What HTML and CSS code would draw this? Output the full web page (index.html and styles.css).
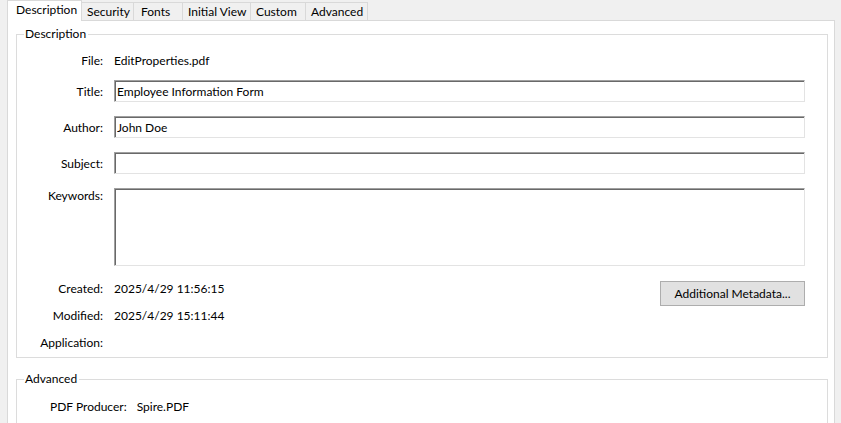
FILE: index.html
```html
<!DOCTYPE html>
<html lang="en">
<head>
    <meta charset="UTF-8">
    <title>Document Properties</title>
    <link rel="stylesheet" href="styles.css">
</head>
<body>
    <div class="window">
        <div class="tabs">
            <div class="tab active">Description</div>
            <div class="tab tab-security">Security</div>
            <div class="tab tab-fonts">Fonts</div>
            <div class="tab tab-view">Initial View</div>
            <div class="tab tab-custom">Custom</div>
            <div class="tab tab-advanced">Advanced</div>
        </div>

        <div class="panel">
            <fieldset class="group group-desc">
                <legend>Description</legend>

                <div class="row row-file">
                    <span class="label">File:</span>
                    <span class="value">EditProperties.pdf</span>
                </div>

                <div class="row row-field">
                    <label class="label" for="title">Title:</label>
                    <input type="text" id="title" class="field" value="Employee Information Form">
                </div>

                <div class="row row-field">
                    <label class="label" for="author">Author:</label>
                    <input type="text" id="author" class="field" value="John Doe">
                </div>

                <div class="row row-field">
                    <label class="label" for="subject">Subject:</label>
                    <input type="text" id="subject" class="field" value="">
                </div>

                <div class="row row-keywords">
                    <label class="label" for="keywords">Keywords:</label>
                    <textarea id="keywords" class="field field-area"></textarea>
                </div>

                <div class="dates">
                    <div class="date-list">
                        <div class="row">
                            <span class="label">Created:</span>
                            <span class="value">2025/4/29 11:56:15</span>
                        </div>
                        <div class="row">
                            <span class="label">Modified:</span>
                            <span class="value">2025/4/29 15:11:44</span>
                        </div>
                        <div class="row">
                            <span class="label">Application:</span>
                            <span class="value"></span>
                        </div>
                    </div>
                    <button type="button" class="btn">Additional Metadata...</button>
                </div>
            </fieldset>

            <fieldset class="group group-adv">
                <legend>Advanced</legend>
                <div class="row">
                    <span class="label label-adv">PDF Producer:</span>
                    <span class="value">Spire.PDF</span>
                </div>
            </fieldset>
        </div>
    </div>
</body>
</html>
```

FILE: styles.css
```css
body {
    margin: 0;
    background-color: #f0f0f0;
    font-family: Lato, "Noto Sans", sans-serif;
    font-size: 12px;
    color: #000;
    overflow: hidden;
}
.window {
    padding: 0 6px 0 7px;
    height: 423px;
}
.tabs {
    display: flex;
    align-items: flex-end;
    height: 20px;
}
.tab {
    box-sizing: border-box;
    height: 18px;
    line-height: 18px;
    padding: 0 5px;
    border: 1px solid #d9d9d9;
    border-bottom: none;
    border-left: none;
    background-color: #f0f0f0;
    white-space: nowrap;
}
.tab.active {
    position: relative;
    z-index: 1;
    height: 21px;
    margin-bottom: -1px;
    width: 75px;
    padding: 0 0 0 8px;
    line-height: 17px;
    border-left: 1px solid #d9d9d9;
    background-color: #fff;
}
.tab-security { width: 52px; }
.tab-fonts { width: 49px; padding-left: 7px; }
.tab-view { width: 68px; }
.tab-custom { width: 55px; }
.tab-advanced { width: 62px; }
.panel {
    height: 420px;
    box-sizing: border-box;
    border: 1px solid #d9d9d9;
    background-color: #fff;
    padding: 5px 6px 0 8px;
}
.group {
    margin: 0;
    padding: 0 22px 0 0;
    border: 1px solid #dcdcdc;
    min-width: 0;
}
.group legend {
    margin-left: 7px;
    padding: 0 2px 0 1px;
    line-height: 16px;
}
.row {
    display: flex;
    align-items: center;
    height: 16px;
}
.label {
    width: 86px;
    margin-right: 11px;
    text-align: right;
    flex-shrink: 0;
}
.value {
    white-space: nowrap;
}
.row-file {
    margin-top: 10px;
}
.row-field {
    height: 22px;
    margin-top: 12px;
}
.row-field + .row-field {
    margin-top: 14px;
}
.row-keywords {
    height: 78px;
    margin-top: 14px;
    align-items: flex-start;
}
.row-keywords .label {
    line-height: 16px;
}
.field {
    flex: 1;
    box-sizing: border-box;
    height: 22px;
    margin: 0;
    padding: 0 2px;
    border: 1px solid;
    border-color: #a0a0a0 #e3e3e3 #e3e3e3 #a0a0a0;
    box-shadow: inset 1px 1px 0 #696969;
    background-color: #fff;
    font-family: inherit;
    font-size: inherit;
    color: #000;
    outline: none;
}
.field-area {
    height: 78px;
    resize: none;
}
.dates {
    display: flex;
    justify-content: space-between;
    align-items: flex-start;
    margin-top: 14px;
    padding-bottom: 7px;
}
.date-list {
    display: flex;
    flex-direction: column;
    gap: 11px;
}
.btn {
    width: 145px;
    height: 25px;
    margin-top: 1px;
    padding: 0;
    border: 1px solid #adadad;
    background-color: #e1e1e1;
    font-family: inherit;
    font-size: inherit;
    color: #000;
}
.group-adv {
    margin-top: 13px;
    height: 80px;
    padding-top: 3px;
}
.group-adv .row {
    margin-top: 8px;
}
.label-adv {
    width: auto;
    margin-left: 33px;
    margin-right: 10px;
}
```
